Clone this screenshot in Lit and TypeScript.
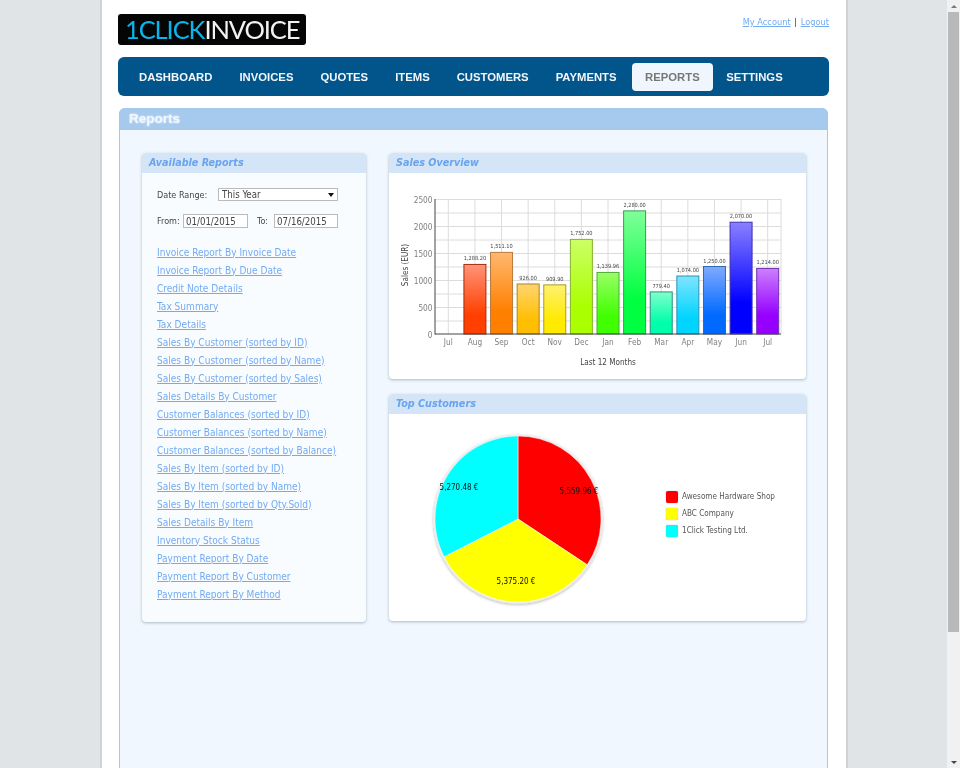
import { LitElement, html, css, svg } from 'lit'
import { customElement } from 'lit/decorators.js'

const NAV = ['DASHBOARD', 'INVOICES', 'QUOTES', 'ITEMS', 'CUSTOMERS', 'PAYMENTS', 'REPORTS', 'SETTINGS']

const REPORTS = [
  'Invoice Report By Invoice Date',
  'Invoice Report By Due Date',
  'Credit Note Details',
  'Tax Summary',
  'Tax Details',
  'Sales By Customer (sorted by ID)',
  'Sales By Customer (sorted by Name)',
  'Sales By Customer (sorted by Sales)',
  'Sales Details By Customer',
  'Customer Balances (sorted by ID)',
  'Customer Balances (sorted by Name)',
  'Customer Balances (sorted by Balance)',
  'Sales By Item (sorted by ID)',
  'Sales By Item (sorted by Name)',
  'Sales By Item (sorted by Qty.Sold)',
  'Sales Details By Item',
  'Inventory Stock Status',
  'Payment Report By Date',
  'Payment Report By Customer',
  'Payment Report By Method',
]

const MONTHS = [
  { m: 'Jul', v: 0, label: '', top: '', bot: '', line: '' },
  { m: 'Aug', v: 1288.2, label: '1,288.20', top: '#ff9478', bot: '#ff4000', line: '#a02c10' },
  { m: 'Sep', v: 1511.1, label: '1,511.10', top: '#ffb870', bot: '#ff8000', line: '#b87a3c' },
  { m: 'Oct', v: 926, label: '926.00', top: '#ffd470', bot: '#ffbf00', line: '#a88428' },
  { m: 'Nov', v: 909.9, label: '909.90', top: '#fff070', bot: '#ffea00', line: '#a89c28' },
  { m: 'Dec', v: 1752, label: '1,752.00', top: '#ccff66', bot: '#aaff00', line: '#86b030' },
  { m: 'Jan', v: 1139.96, label: '1,139.96', top: '#99ff66', bot: '#40ff00', line: '#50a838' },
  { m: 'Feb', v: 2280, label: '2,280.00', top: '#80ff99', bot: '#00ff40', line: '#389a58' },
  { m: 'Mar', v: 779.4, label: '779.40', top: '#80ffcc', bot: '#00ffaa', line: '#2c9078' },
  { m: 'Apr', v: 1074, label: '1,074.00', top: '#80e4ff', bot: '#00d5ff', line: '#3090b0' },
  { m: 'May', v: 1250, label: '1,250.00', top: '#80aaff', bot: '#006aff', line: '#3068b0' },
  { m: 'Jun', v: 2070, label: '2,070.00', top: '#8a80ff', bot: '#0000ff', line: '#3c30b0' },
  { m: 'Jul', v: 1214, label: '1,214.00', top: '#cc80ff', bot: '#9500ff', line: '#7030b0' },
]

const CUSTOMERS = [
  { name: 'Awesome Hardware Shop', v: 5559.96, label: '5,559.96 €', color: '#ff0000', x: 579, y: 491 },
  { name: 'ABC Company', v: 5375.2, label: '5,375.20 €', color: '#ffff00', x: 516, y: 581 },
  { name: '1Click Testing Ltd.', v: 5270.48, label: '5,270.48 €', color: '#00ffff', x: 459, y: 487 },
]

// plot area of the bar chart, in page pixels
const PX = 435
const PW = 346
const PY = 199
const PH = 135
const STEP = PW / 13

function barChart() {
  const yOf = (v: number) => PY + PH - (v / 2500) * PH
  return svg`
    <defs>
      ${MONTHS.map((d, i) => svg`
        <linearGradient id="bar${i}" x1="0" y1="0" x2="0" y2="1">
          <stop offset="0" stop-color=${d.top}></stop>
          <stop offset="0.72" stop-color=${d.bot}></stop>
          <stop offset="1" stop-color=${d.bot}></stop>
        </linearGradient>`)}
    </defs>
    ${Array.from({ length: 10 }, (_, i) => svg`
      <line x1=${PX} x2=${PX + PW} y1=${PY + i * 13.5 + 0.5} y2=${PY + i * 13.5 + 0.5} stroke="#dcdcdc"></line>`)}
    ${MONTHS.map((_, i) => svg`
      <line x1=${PX + STEP * (i + 0.5)} x2=${PX + STEP * (i + 0.5)} y1=${PY} y2=${PY + PH} stroke="#dcdcdc"></line>`)}
    <line x1=${PX + PW} x2=${PX + PW} y1=${PY} y2=${PY + PH} stroke="#dcdcdc"></line>
    ${[0, 500, 1000, 1500, 2000, 2500].map((v) => svg`
      <text class="tick" x="432.5" y=${yOf(v) + 3.5} text-anchor="end">${v}</text>`)}
    ${MONTHS.map((d, i) => {
      const cx = PX + STEP * (i + 0.5)
      return svg`
        ${d.v ? svg`
          <rect x=${cx - 11} y=${yOf(d.v)} width="22" height=${PY + PH - yOf(d.v)} fill="url(#bar${i})" stroke=${d.line}></rect>
          <text class="val" x=${cx} y=${yOf(d.v) - 4} text-anchor="middle">${d.label}</text>` : ''}
        <text class="tick" x=${cx} y="345" text-anchor="middle">${d.m}</text>`
    })}
    <line x1=${PX} x2=${PX} y1=${PY} y2=${PY + PH + 0.5} stroke="#444"></line>
    <line x1=${PX} x2=${PX + PW} y1=${PY + PH} y2=${PY + PH} stroke="#444"></line>
    <text class="title" transform="translate(408 265) rotate(-90)" text-anchor="middle">Sales (EUR)</text>
    <text class="title" x="608" y="365" text-anchor="middle">Last 12 Months</text>
  `
}

function pieChart() {
  const cx = 518
  const cy = 519
  const r = 83
  const total = CUSTOMERS.reduce((s, c) => s + c.v, 0)
  let a = 0
  const at = (t: number) => `${cx + r * Math.sin(t)} ${cy - r * Math.cos(t)}`
  return svg`
    <defs>
      <filter id="pieShadow" x="-10%" y="-10%" width="120%" height="120%">
        <feDropShadow dx="0" dy="1" stdDeviation="1.5" flood-color="#000" flood-opacity="0.3"></feDropShadow>
      </filter>
    </defs>
    <circle cx=${cx} cy=${cy} r=${r + 1.5} fill="#ececec" filter="url(#pieShadow)"></circle>
    ${CUSTOMERS.map((c) => {
      const from = a
      a += (c.v / total) * Math.PI * 2
      const d = `M${cx} ${cy}L${at(from)}A${r} ${r} 0 0 1 ${at(a)}Z`
      return svg`<path d=${d} fill=${c.color} stroke="#fff" stroke-width="0.5"></path>`
    })}
    ${CUSTOMERS.map((c) => svg`
      <text class="pieval" x=${c.x} y=${c.y + 3} text-anchor="middle">${c.label}</text>`)}
  `
}

@customElement('app-root')
export class AppRoot extends LitElement {
  static styles = css`
    :host {
      display: flex;
      height: 768px;
      overflow: hidden;
      background: #e0e4e7;
      font-family: 'DejaVu Sans', sans-serif;
      font-stretch: condensed;
      font-size: 10.05px;
      color: #444;
    }
    .page {
      flex: 1;
      min-width: 0;
      filter: blur(0.55px);
    }
    .wrap {
      box-sizing: border-box;
      width: 748px;
      height: 768px;
      margin-left: 100px;
      padding: 14px 17px 0 16px;
      background: #fff;
      border-left: 2px solid #d0d2d4;
      border-right: 2px solid #d0d2d4;
    }
    .top {
      display: flex;
      justify-content: space-between;
      align-items: flex-start;
      height: 43px;
    }
    .logo {
      box-sizing: border-box;
      width: 188px;
      height: 31px;
      padding-left: 7px;
      background: #050505;
      border-radius: 3px;
      font-family: Lato, sans-serif;
      font-stretch: normal;
      font-size: 25.5px;
      font-weight: 400;
      letter-spacing: -1.1px;
      line-height: 31px;
      color: #f2f2f2;
      white-space: nowrap;
    }
    .logo b {
      font-weight: 400;
      color: #08b6ec;
    }
    .account {
      padding-top: 2px;
      font-size: 9.2px;
      color: #333;
    }
    .account span {
      margin: 0 1px;
    }
    a {
      color: #74abf0;
      text-decoration: underline;
    }
    nav {
      box-sizing: border-box;
      display: flex;
      height: 39px;
      padding: 6px 7.5px 5px;
      background: #01558a;
      border-radius: 6px;
      font-family: 'Liberation Sans', sans-serif;
      font-stretch: normal;
      font-size: 11.3px;
      font-weight: 700;
    }
    nav span {
      padding: 0 13.5px;
      line-height: 28px;
      color: #f2f6fa;
      border-radius: 4px;
      white-space: nowrap;
    }
    nav span.on {
      margin-left: 2px;
      padding: 0 13px;
      background: #f0f6fd;
      color: #777;
    }
    .panel {
      box-sizing: border-box;
      height: 700px;
      margin: 12px 1px 0;
      background: #f0f7fe;
      border: 1px solid #a9c7e6;
      border-radius: 6px 6px 0 0;
    }
    .panel h1 {
      margin: -1px -1px 0;
      height: 22px;
      padding-left: 10px;
      background: #a6c9ee;
      border-radius: 6px 6px 0 0;
      font-family: 'Liberation Sans', sans-serif;
      font-stretch: normal;
      font-size: 13.5px;
      font-weight: 700;
      line-height: 22px;
      color: #eef6fe;
      text-shadow: 0 0 2px #fff;
    }
    .cols {
      display: flex;
      gap: 23px;
      padding: 23px 0 0 22px;
    }
    .side {
      display: flex;
      flex-direction: column;
      gap: 15px;
      width: 417px;
    }
    .card {
      background: #fff;
      border-radius: 4px;
      box-shadow: 0 1px 3px rgba(90, 110, 130, 0.45);
    }
    .card h2 {
      box-sizing: border-box;
      margin: 0;
      height: 20px;
      padding-left: 7px;
      background: #d3e5f6;
      border-radius: 4px 4px 0 0;
      font-size: 10.7px;
      font-style: italic;
      font-weight: 700;
      line-height: 19px;
      color: #6aa3ee;
    }
    .reports {
      width: 224px;
      height: 469px;
      background: #f9fcff;
    }
    .form {
      padding: 15px 28px 0 15px;
      font-size: 9px;
    }
    .row {
      display: flex;
      align-items: center;
      height: 14px;
    }
    .row.first {
      height: 13px;
    }
    .row + .row {
      margin-top: 13px;
    }
    .row label {
      white-space: nowrap;
    }
    .row .fromlabel {
      width: 26px;
    }
    .row .tolabel {
      width: 17px;
      margin-left: 9px;
    }
    .pick {
      position: relative;
      display: block;
      width: 120px;
      margin-left: auto;
    }
    select,
    input {
      box-sizing: border-box;
      display: block;
      height: 14px;
      margin: 0;
      padding: 0 2px;
      background: #fff;
      border: 1px solid #bbb;
      border-radius: 0;
      font: inherit;
      font-stretch: inherit;
      font-size: 9.6px;
      color: #444;
      outline: none;
    }
    select {
      width: 100%;
      height: 13px;
      padding: 0 3px;
      appearance: none;
    }
    .pick i {
      position: absolute;
      top: 5px;
      right: 4px;
      border: 3.5px solid transparent;
      border-top: 4px solid #111;
      border-bottom: 0;
    }
    input.from {
      width: 65px;
    }
    input.to {
      width: 64px;
    }
    .links {
      display: flex;
      flex-direction: column;
      align-items: flex-start;
      padding: 15.5px 0 0 15px;
      line-height: 18px;
    }
    .chart {
      display: block;
    }
    .sales {
      height: 226px;
    }
    .customers {
      height: 227px;
    }
    .tick {
      font-size: 8.2px;
      fill: #808080;
    }
    .val {
      font-size: 5.6px;
      fill: #444;
    }
    .title {
      font-size: 8.1px;
      fill: #444;
    }
    .pieval {
      font-size: 8px;
      fill: #111;
    }
    .legend {
      position: absolute;
      left: 277px;
      top: 76px;
      display: flex;
      flex-direction: column;
      gap: 4px;
      font-size: 8.1px;
      line-height: 13px;
      color: #555;
    }
    .legend div {
      display: flex;
      align-items: center;
      gap: 4px;
    }
    .legend i {
      width: 12px;
      height: 12px;
      border-radius: 2px;
      box-shadow: 0 0 1px rgba(0, 0, 0, 0.5);
    }
    .piebox {
      position: relative;
    }
    .scroll {
      display: flex;
      flex-direction: column;
      align-items: center;
      width: 13px;
      background: #f1f1f1;
    }
    .scroll .up,
    .scroll .down {
      flex: none;
      height: 12px;
      width: 100%;
      display: flex;
      align-items: center;
      justify-content: center;
    }
    .scroll .up::before {
      content: '';
      border: 3px solid transparent;
      border-bottom: 3px solid #777;
      border-top: 0;
    }
    .scroll .down::before {
      content: '';
      border: 3px solid transparent;
      border-top: 3px solid #444;
      border-bottom: 0;
    }
    .thumb {
      flex: none;
      width: 11px;
      height: 620px;
      background: #b9b9b9;
    }
    .gap {
      flex: 1;
    }
  `

  render() {
    return html`
      <div class="page">
        <div class="wrap">
          <div class="top">
            <div class="logo"><b>1CLICK</b>INVOICE</div>
            <div class="account"><a href="#">My Account</a> <span>|</span> <a href="#">Logout</a></div>
          </div>
          <nav>
            ${NAV.map((n) => html`<span class=${n === 'REPORTS' ? 'on' : ''}>${n}</span>`)}
          </nav>
          <div class="panel">
            <h1>Reports</h1>
            <div class="cols">
              <div class="card reports">
                <h2>Available Reports</h2>
                <div class="form">
                  <div class="row first">
                    <label>Date Range:</label>
                    <span class="pick">
                      <select><option>This Year</option></select>
                      <i></i>
                    </span>
                  </div>
                  <div class="row">
                    <label class="fromlabel">From:</label>
                    <input class="from" value="01/01/2015" />
                    <label class="tolabel">To:</label>
                    <input class="to" value="07/16/2015" />
                  </div>
                </div>
                <div class="links">
                  ${REPORTS.map((r) => html`<a href="#">${r}</a>`)}
                </div>
              </div>
              <div class="side">
                <div class="card sales">
                  <h2>Sales Overview</h2>
                  <svg class="chart" width="417" height="206" viewBox="389 173 417 206">${barChart()}</svg>
                </div>
                <div class="card customers">
                  <h2>Top Customers</h2>
                  <div class="piebox">
                    <svg class="chart" width="417" height="207" viewBox="389 414 417 207">${pieChart()}</svg>
                    <div class="legend">
                      ${CUSTOMERS.map((c) => html`
                        <div><i style="background:${c.color}"></i>${c.name}</div>`)}
                    </div>
                  </div>
                </div>
              </div>
            </div>
          </div>
        </div>
      </div>
      <div class="scroll">
        <div class="up"></div>
        <div class="thumb"></div>
        <div class="gap"></div>
        <div class="down"></div>
      </div>
    `
  }
}
